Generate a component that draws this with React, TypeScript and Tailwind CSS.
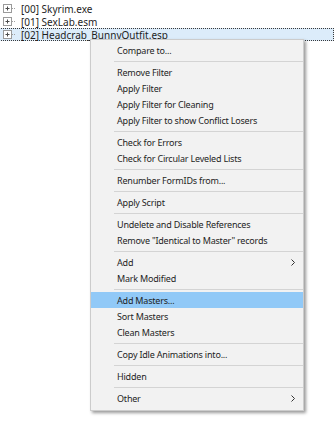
import { ReactNode } from 'react';

type Entry = { label: string; sub?: boolean; active?: boolean } | 'sep';

const menu: Entry[] = [
  { label: 'Compare to...' },
  'sep',
  { label: 'Remove Filter' },
  { label: 'Apply Filter' },
  { label: 'Apply Filter for Cleaning' },
  { label: 'Apply Filter to show Conflict Losers' },
  'sep',
  { label: 'Check for Errors' },
  { label: 'Check for Circular Leveled Lists' },
  'sep',
  { label: 'Renumber FormIDs from...' },
  'sep',
  { label: 'Apply Script' },
  'sep',
  { label: 'Undelete and Disable References' },
  { label: 'Remove "Identical to Master" records' },
  'sep',
  { label: 'Add', sub: true },
  { label: 'Mark Modified' },
  'sep',
  { label: 'Add Masters...', active: true },
  { label: 'Sort Masters' },
  { label: 'Clean Masters' },
  'sep',
  { label: 'Copy Idle Animations into...' },
  'sep',
  { label: 'Hidden' },
  'sep',
  { label: 'Other', sub: true },
];

function Expander() {
  return (
    <svg width="16" height="13" viewBox="0 0 16 13" className="shrink-0">
      <rect x="2.5" y="2.5" width="8" height="8" fill="#fff" stroke="#9a9a9a" />
      <path d="M4.5 6.5h4M6.5 4.5v4" stroke="#4a4a4a" />
      <path d="M11 6.5h4" stroke="#a0a0a0" strokeDasharray="1 1" />
    </svg>
  );
}

function TreeRow({ children, selected }: { children: ReactNode; selected?: boolean }) {
  return (
    <div
      className={`flex items-center gap-[4px] h-[13px] pl-[1px] ${
        selected ? 'bg-[#dcecfa] border border-dotted border-[#3a3a3a] -ml-[1px]' : ''
      }`}
    >
      <Expander />
      <span className="leading-none text-[10px] tracking-normal">{children}</span>
    </div>
  );
}

export default function App() {
  return (
    <div
      className="relative w-[334px] h-[430px] bg-white overflow-hidden text-[9px] tracking-[-0.2px] text-[#1e1e1e]"
      style={{ fontFamily: '"Noto Sans", "Open Sans", sans-serif' }}
    >
      {/* Plugin tree */}
      <div className="pt-[2px] flex flex-col">
        <TreeRow>[00] Skyrim.exe</TreeRow>
        <TreeRow>[01] SexLab.esm</TreeRow>
        <TreeRow selected>[02] Headcrab_BunnyOutfit.esp</TreeRow>
      </div>

      {/* Context menu */}
      <div className="absolute left-[90px] top-[39px] w-[214px] bg-[#f2f2f2] border border-[#cccccc] pt-[2px] pb-[4px] shadow-[2px_2px_3px_rgba(0,0,0,0.4)]">
        {menu.map((item, i) =>
          item === 'sep' ? (
            <div key={i} className="h-[6px] flex items-center pl-[23px]">
              <div className="h-px w-full bg-[#d4d4d4]" />
            </div>
          ) : (
            <div
              key={i}
              className={`h-[16px] flex items-center justify-between pl-[26px] pr-[8px] ${
                item.active ? 'bg-[#91c9f7]' : ''
              }`}
            >
              <span className="leading-none whitespace-nowrap">{item.label}</span>
              {item.sub && (
                <svg width="4" height="7" viewBox="0 0 4 7">
                  <path d="M0.5 0.5l3 3-3 3" fill="none" stroke="#333" />
                </svg>
              )}
            </div>
          )
        )}
      </div>
    </div>
  );
}
